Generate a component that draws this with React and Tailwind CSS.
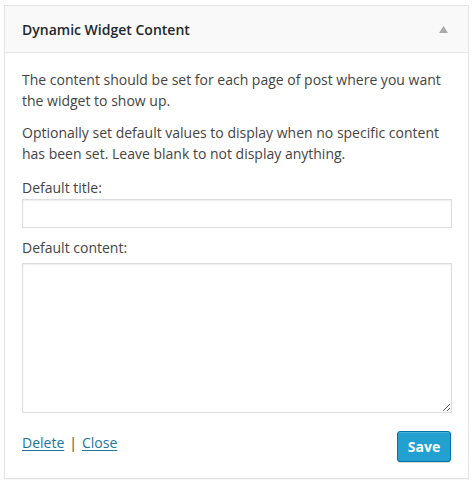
export default function App() {
  const font = { fontFamily: '"Open Sans", "Noto Sans", sans-serif' };
  return (
    <div className="w-[474px] h-[484px] bg-white pt-[5px] pl-[4px]" style={font}>
      <div className="w-[465px] border border-[#e5e5e5] bg-white shadow-[0_1px_1px_rgba(0,0,0,0.04)]">
        {/* widget header */}
        <div className="h-[47px] flex items-center justify-between pl-[17px] pr-[20px] bg-[#f9f9f9] border-b border-[#e5e5e5]">
          <span className="text-[14px] font-semibold text-[#23282d] pt-[1px]">Dynamic Widget Content</span>
          <svg width="9" height="7" viewBox="0 0 9 7" className="mt-[1px]">
            <path d="M4.5 0 L9 7 L0 7 Z" fill="#aaaaaa" />
          </svg>
        </div>

        {/* widget form */}
        <div className="px-[17px] pt-[16px] pb-[16px] text-[14px] leading-[21px] text-[#444]">
          <p>The content should be set for each page of post where you want the widget to show up.</p>
          <p className="mt-[11px]">
            Optionally set default values to display when no specific content has been set. Leave blank to not display anything.
          </p>
          <label className="block mt-[13px]">Default title:</label>
          <input
            type="text"
            className="block mt-[1px] w-[430px] h-[29px] border border-[#dddddd] shadow-[inset_0_1px_2px_rgba(0,0,0,0.07)] bg-white outline-none"
          />
          <label className="block mt-[9px]">Default content:</label>
          <textarea className="block mt-[5px] w-[430px] h-[150px] border border-[#dddddd] shadow-[inset_0_1px_2px_rgba(0,0,0,0.07)] bg-white outline-none resize-y" />

          <div className="mt-[18px] flex items-start justify-between">
            <div className="mt-[1px] text-[#21759b]">
              <a href="#" className="underline underline-offset-[2px]">Delete</a>
              <span className="text-[#444] mx-[5px]">|</span>
              <a href="#" className="underline underline-offset-[2px]">Close</a>
            </div>
            <button className="w-[54px] h-[31px] rounded-[3px] bg-[#22a0cf] border border-[#0074a2] text-white text-[14px] font-bold shadow-[inset_0_1px_0_rgba(120,200,230,0.5),0_1px_0_rgba(0,0,0,0.15)]">
              Save
            </button>
          </div>
        </div>
      </div>
    </div>
  );
}
